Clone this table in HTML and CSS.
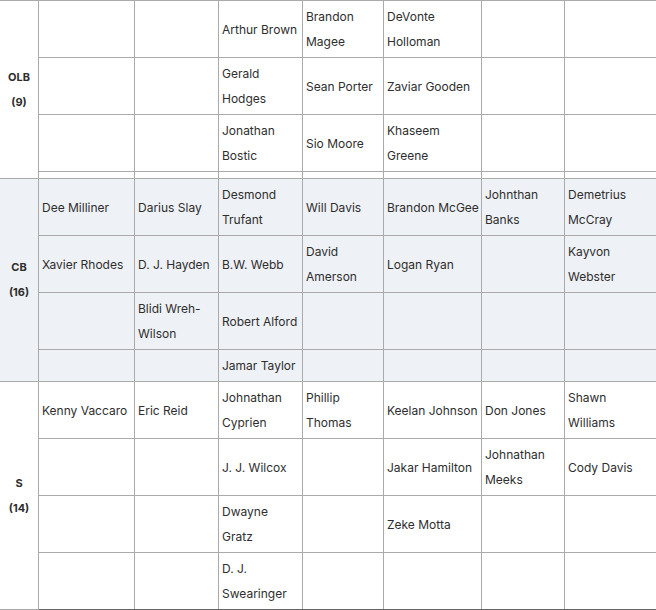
FILE: index.html
```html
<!DOCTYPE html>
<html>
<head>
<meta charset="utf-8">
<link rel="stylesheet" href="styles.css">
</head>
<body>
<div class="frame">
<table class="depth">
  <colgroup>
    <col class="c-pos"><col class="c2"><col class="c3"><col class="c4"><col class="c5"><col class="c6"><col class="c7"><col class="c8">
  </colgroup>
  <tbody class="grp">
    <tr>
      <td class="pos" rowspan="4">OLB<br>(9)</td>
      <td></td><td></td><td>Arthur Brown</td><td>Brandon<br>Magee</td><td>DeVonte<br>Holloman</td><td></td><td></td>
    </tr>
    <tr>
      <td></td><td></td><td>Gerald<br>Hodges</td><td>Sean Porter</td><td>Zaviar Gooden</td><td></td><td></td>
    </tr>
    <tr>
      <td></td><td></td><td>Jonathan<br>Bostic</td><td>Sio Moore</td><td>Khaseem<br>Greene</td><td></td><td></td>
    </tr>
    <tr>
      <td></td><td></td><td></td><td></td><td></td><td></td><td></td>
    </tr>
  </tbody>
  <tbody class="grp alt">
    <tr>
      <td class="pos" rowspan="4">CB<br>(16)</td>
      <td>Dee Milliner</td><td>Darius Slay</td><td>Desmond<br>Trufant</td><td>Will Davis</td><td>Brandon McGee</td><td>Johnthan<br>Banks</td><td>Demetrius<br>McCray</td>
    </tr>
    <tr>
      <td>Xavier Rhodes</td><td>D. J. Hayden</td><td>B.W. Webb</td><td>David<br>Amerson</td><td>Logan Ryan</td><td></td><td>Kayvon<br>Webster</td>
    </tr>
    <tr>
      <td></td><td>Blidi Wreh-<br>Wilson</td><td>Robert Alford</td><td></td><td></td><td></td><td></td>
    </tr>
    <tr>
      <td></td><td></td><td>Jamar Taylor</td><td></td><td></td><td></td><td></td>
    </tr>
  </tbody>
  <tbody class="grp">
    <tr>
      <td class="pos" rowspan="4">S<br>(14)</td>
      <td>Kenny Vaccaro</td><td>Eric Reid</td><td>Johnathan<br>Cyprien</td><td>Phillip<br>Thomas</td><td>Keelan Johnson</td><td>Don Jones</td><td>Shawn<br>Williams</td>
    </tr>
    <tr>
      <td></td><td></td><td>J. J. Wilcox</td><td></td><td>Jakar Hamilton</td><td>Johnathan<br>Meeks</td><td>Cody Davis</td>
    </tr>
    <tr>
      <td></td><td></td><td>Dwayne<br>Gratz</td><td></td><td>Zeke Motta</td><td></td><td></td>
    </tr>
    <tr class="last">
      <td></td><td></td><td>D. J.<br>Swearinger</td><td></td><td></td><td></td><td></td>
    </tr>
  </tbody>
</table>
</div>
</body>
</html>
```
FILE: styles.css
```css
html, body {
  margin: 0;
  padding: 0;
  background: #ffffff;
}
.frame {
  width: 656px;
  overflow: hidden;
}
.depth {
  border-collapse: collapse;
  table-layout: fixed;
  width: 659px;
  margin-left: -1px;
  font-family: "Inter", "Open Sans", sans-serif;
  font-size: 12px;
  line-height: 25px;
  color: #2e2e2e;
}
.c-pos { width: 39px; }
.c2 { width: 96px; }
.c3 { width: 84px; }
.c4 { width: 84px; }
.c5 { width: 81px; }
.c6 { width: 98px; }
.c7 { width: 83px; }
.c8 { width: 94px; }
.depth td {
  border: 1px solid #aaaaaa;
  padding: 3px 2px 3px 3px;
  vertical-align: middle;
  white-space: nowrap;
  overflow: hidden;
}
.depth td.pos {
  text-align: center;
  font-weight: 700;
  font-size: 11px;
  padding: 3px 0;
}
.alt td {
  background: #eef1f5;
}
.last td {
  border-bottom-color: #666666;
}
```
